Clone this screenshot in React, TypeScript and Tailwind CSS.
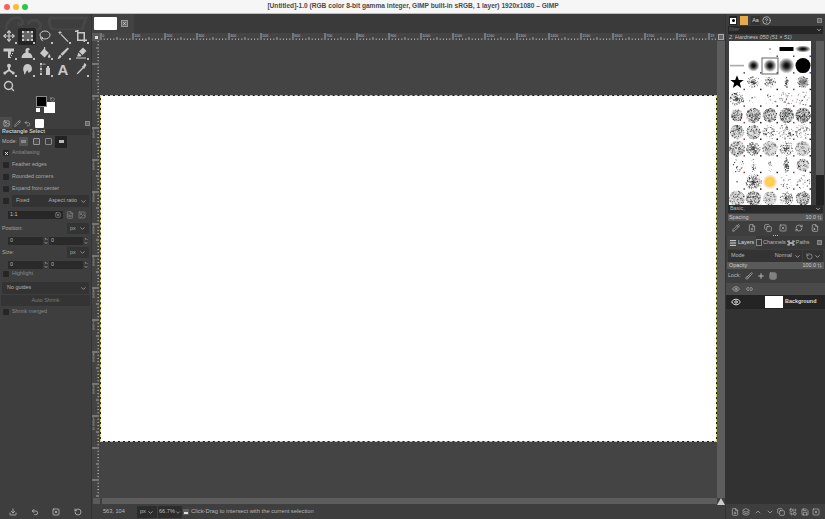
import type { ReactNode } from 'react';
import { ChevronDown, ChevronUp, Eye, Move, Lasso, Search, Undo2, RotateCcw, SquareX, Layers, FileText, Copy, Pencil, RefreshCw, ArrowUpDown, Link2, Plus, Grid3x3, Brush, FilePlus, Save, Download, Image, HelpCircle, FileInput, Combine, Menu, X } from 'lucide-react';

const font = 'font-["Liberation_Sans",Arial,sans-serif]';

function Glyph({ children }: { children: ReactNode }) {
  return (
    <svg width="12" height="12" viewBox="0 0 12 12" fill="currentColor">
      {children}
    </svg>
  );
}

// gimp's own tool icons, the packages have nothing close for most of these
const tools: ReactNode[] = [
  <Move size={12} strokeWidth={2.4} />,
  <span className="w-[11px] h-[10px] border-2 border-dotted border-[#c8c8c8] bg-[#666]" />,
  <Lasso size={12} strokeWidth={2} />,
  <Glyph>
    <path d="M3 .5l.6 1.6 1.6.6-1.6.6L3 5l-.6-1.7L.8 2.7l1.6-.6z" />
    <path d="M4.5 4l7 7.2-.9.8-7-7.2z" />
  </Glyph>,
  <Glyph>
    <path d="M2 0h1.5v2H10v7.5h2V11h-2v1H8.5v-1H2V2H0V.5h2zm1.5 3.5V9.5h5v-6z" />
  </Glyph>,
  <Glyph>
    <path d="M.5 1.5H11v3H8v2.5l-1 1V11H5V4.5H.5z" />
    <path d="M9 6h1v1H9zM8 8h1v1H8zM7 10h1v1H7z" />
  </Glyph>,
  <Glyph>
    <path d="M.5 11c0-3 2-5 4-5.3V3c0-2.500 3.500-2.800 4.500-.6L7.500 3v2.700c2.500.3 4 2.300 4 5.300z" />
  </Glyph>,
  <Glyph>
    <path d="M5 1.500L9.800 6 5.500 10.500 1 6.200z" />
    <path d="M5 0h1.200v4H5zM10.200 7c.8 1.200 1.300 2 1.300 2.700a1.200 1.200 0 0 1-2.500 0c0-.7.500-1.500 1.200-2.700z" />
  </Glyph>,
  <Glyph>
    <path d="M10.600.5L12 1.800 5.500 8.800 3.500 7z" />
    <path d="M3 7.800l1.600 1.500C4 11 2.500 11.700.5 12c.8-1 1-3 2.500-4.200z" />
  </Glyph>,
  <Glyph>
    <path d="M8 .5L11.500 4 7.500 8 4 4.500z" />
    <path d="M3.500 5.500L6.500 8.500 5.500 9.500 2 9.500zM1 10.500h10v1H1z" />
  </Glyph>,
  <Glyph>
    <circle cx="6" cy="2.800" r="2" />
    <path d="M5 4h2v2.500l3 2.200-1 1.600L6 8.200 3 10.300 2 8.700l3-2.200z" />
    <circle cx="1.800" cy="10" r="1.500" />
    <circle cx="10.200" cy="10" r="1.500" />
  </Glyph>,
  <Glyph>
    <path d="M6.500 1a4.500 4.500 0 0 1 2 8.500C6.800 10 6.500 8.500 7.500 7.500 6 7 5 8.500 4 11.500c-1 0-1-1.500-1-2.500C1.500 7 2 1 6.500 1z" />
  </Glyph>,
  <Glyph>
    <path d="M7 5.500c0-1 1-1 1-1V3h2v1.500s1 0 1 1V12H7z" />
    <path d="M1 0h2v2H1zM1 5h2v2H1zM1 10h2v2H1zM1.600 2.500h.8v2h-.8zM1.600 7.500h.8v2h-.8zM3.500 .7h3v.7h-3z" />
  </Glyph>,
  <span className={`text-[15px] leading-none font-bold ${font}`}>A</span>,
  <Glyph>
    <path d="M9 .5c1-.7 2.800 1 2.200 2.200L9.700 4.300l.5.5-1 1-.6-.5-5.100 5.200-2 1 1-2.100 5.100-5.200-.5-.6 1-1 .4.400z" />
  </Glyph>,
  <Search size={12} strokeWidth={2.8} />,
];

function Check({ on }: { on?: boolean }) {
  return (
    <span className="w-[6px] h-[6px] rounded-[1px] bg-[#262626] flex items-center justify-center text-white shrink-0">
      {on && <X size={5} strokeWidth={4} />}
    </span>
  );
}

function CheckRow({ label, on, dim }: { label: string; on?: boolean; dim?: boolean }) {
  return (
    <div className="h-[12px] flex items-center gap-[3px] pl-[3px]">
      <Check on={on} />
      <span className={dim ? 'text-[#8a8a8a]' : 'text-[#a8a8a8]'}>{label}</span>
    </div>
  );
}

function Spin({ value, w }: { value: string; w: string }) {
  return (
    <div className={`h-[8px] bg-[#2a2a2a] rounded-[1px] flex items-center justify-between pl-[2px] text-[#b8b8b8] ${w}`}>
      <span>{value}</span>
      <span className="w-[5px] flex flex-col items-center text-[#c8c8c8] bg-[#3a3a3a]">
        <ChevronUp size={4} strokeWidth={4} />
        <ChevronDown size={4} strokeWidth={4} />
      </span>
    </div>
  );
}

function PxSelect() {
  return (
    <div className="w-[22px] h-[11px] bg-[#333] rounded-[1px] flex items-center justify-between px-[3px] text-[#a8a8a8]">
      <span>px</span>
      <ChevronDown size={7} strokeWidth={2.5} />
    </div>
  );
}

function ToolOptions() {
  return (
    <div className={`flex-1 text-[5.4px] leading-none ${font}`}>
      <div className="h-[6px] mx-[1px] bg-[#353535] flex items-center pl-[1px] font-bold text-[#c4c4c4]">Rectangle Select</div>
      <div className="h-[13px] flex items-center pl-[2px] text-[#b0b0b0]">
        <span className="w-[17px]">Mode:</span>
        <div className="flex items-center gap-[3px] text-[#777]">
          <span className="w-[9px] h-[9px] bg-[#555] rounded-[1px] flex items-center justify-center"><span className="w-[5px] h-[3px] bg-[#888]" /></span>
          <span className="w-[7px] h-[7px] border border-[#999] bg-[#4a4a4a] rounded-[1px] ml-[2px]" />
          <span className="w-[7px] h-[7px] border border-[#888] rounded-[1px] ml-[2px]" />
          <span className="w-[12px] h-[12px] bg-[#222] rounded-[1px] flex items-center justify-center">
            <span className="w-[5px] h-[3px] bg-[#bbb]" />
          </span>
        </div>
      </div>
      <div className="mt-[-1px]">
        <CheckRow label="Antialiasing" on dim />
        <CheckRow label="Feather edges" />
        <CheckRow label="Rounded corners" />
        <CheckRow label="Expand from center" />
      </div>
      <div className="h-[12px] flex items-center gap-[3px] pl-[3px] pr-[2px]">
        <Check />
        <div className="flex-1 h-[12px] bg-[#333] rounded-[1px] flex items-center justify-between pl-[4px] pr-[2px] text-[#b0b0b0]">
          <span>Fixed</span>
          <span className="flex items-center gap-[3px]">Aspect ratio <ChevronDown size={7} strokeWidth={2.5} /></span>
        </div>
      </div>
      <div className="h-[10px] mt-[3px] flex items-center pl-[8px] gap-[3px]">
        <div className="w-[55px] h-[8px] bg-[#272727] rounded-[1px] flex items-center justify-between px-[2px] text-[#c4c4c4]">
          <span>1:1</span>
          <SquareX size={6} className="text-[#aaa]" />
        </div>
        <FileText size={8} className="text-[#8d8d8d]" />
        <Image size={8} className="text-[#8d8d8d] ml-[1px]" />
      </div>
      <div className="h-[11px] mt-[3px] flex items-center justify-between pl-[2px] pr-[2px] text-[#a8a8a8]">
        <span>Position:</span>
        <PxSelect />
      </div>
      <div className="h-[9px] mt-[2px] flex items-center pl-[8px] gap-[1px]">
        <Spin value="0" w="w-[40px]" />
        <Spin value="0" w="w-[39px]" />
      </div>
      <div className="h-[11px] mt-[2px] flex items-center justify-between pl-[2px] pr-[2px] text-[#a8a8a8]">
        <span>Size:</span>
        <PxSelect />
      </div>
      <div className="h-[9px] mt-[2px] flex items-center pl-[8px] gap-[1px]">
        <Spin value="0" w="w-[40px]" />
        <Spin value="0" w="w-[39px]" />
      </div>
      <div className="mt-[-1px]">
        <CheckRow label="Highlight" dim />
      </div>
      <div className="h-[12px] mt-[2px] mx-[2px] bg-[#333] rounded-[1px] flex items-center justify-between pl-[5px] pr-[2px] text-[#b0b0b0]">
        <span>No guides</span>
        <ChevronDown size={7} strokeWidth={2.5} />
      </div>
      <div className="h-[11px] mt-[1px] mx-[1px] bg-[#343434] rounded-[1px] flex items-center justify-center text-[#7d7d7d]">Auto Shrink</div>
      <CheckRow label="Shrink merged" dim />
    </div>
  );
}

function LeftDock() {
  return (
    <aside className="w-[91px] shrink-0 bg-[#3e3e3e] flex flex-col relative">
      <svg className="absolute left-0 top-0" width="91" height="16" viewBox="0 0 91 16">
        <path d="M6 16C6 6 14 2 20 4c4 2 3 7 0 7-2 0-2-2 0-2M28 10c2-5 10-5 12 0s-2 6-6 6M50 4h36l-4 12H56c-6 0-8-8-6-12z" fill="none" stroke="#474747" strokeWidth="3" />
      </svg>
      <div className="relative pt-[14px] grid grid-cols-[repeat(5,18px)] auto-rows-[16.500px] h-[80px]">
        {tools.map((icon, i) => (
          <div key={i} className={`relative flex items-center justify-center text-[#c9c9c9] ${i === 1 ? 'bg-[#242424] rounded-[2px]' : ''}`}>
            {icon}
            {i !== 13 && i !== 15 && <span className="absolute right-[1px] bottom-[1px] w-[2px] h-[2px] bg-[#c0c0c0]" />}
          </div>
        ))}
      </div>
      <div className="relative h-[23px] ml-[36px] w-[22px]">
        <span className="absolute left-[8px] top-[8px] w-[11px] h-[11px] bg-white" />
        <span className="absolute left-0 top-[2px] w-[11px] h-[11px] bg-black border border-[#8a8a8a]" />
        <span className="absolute left-0 top-[14px] w-[4px] h-[4px] bg-white" />
        <RotateCcw size={5} className="absolute left-[14px] top-[3px] text-[#ccc]" />
      </div>
      <div className="h-[12px] flex items-center">
        <div className="w-[12px] h-[12px] bg-[#4b4b4b] flex items-center justify-center"><Image size={7} className="text-[#ccc]" /></div>
        <Pencil size={7} className="text-[#bbb] ml-[2px]" />
        <Undo2 size={7} className="text-[#bbb] ml-[3px]" />
        <span className="w-[9px] h-[9px] bg-white ml-[4px] rounded-[1px]" />
        <span className="w-[5px] h-[5px] bg-[#666] ml-[41px] border border-[#888]" />
      </div>
      <ToolOptions />
      <div className="h-[14px] flex items-center justify-around pl-[2px] pr-[2px] text-[#bdbdbd]">
        <Download size={8} strokeWidth={2.4} />
        <Undo2 size={8} strokeWidth={2.4} />
        <SquareX size={8} strokeWidth={2.4} />
        <RotateCcw size={8} strokeWidth={2.4} />
      </div>
    </aside>
  );
}

const hTicks = Array.from({ length: 195 }, (_, i) => i);
const vTicks = Array.from({ length: 148 }, (_, i) => i);
const rulerLabels = ['0', '100', '200', '300', '400', '500', '600', '700', '800', '900', '1000', '1100', '1200', '1300', '1400', '1500', '1600', '1700', '1800', '19'];
const sideLabels = ['0', '100', '200', '300', '400', '500', '600', '700', '800', '900', '1000'];

function TopRuler() {
  return (
    <svg width="618" height="8" viewBox="0 0 618 8" className="block">
      {hTicks.map((i) => {
        const x = 1 + i * 3.2;
        const h = i % 10 === 0 ? 8 : i % 5 === 0 ? 3 : 1.6;
        return <line key={i} x1={x} x2={x} y1={7 - h} y2={7} stroke="#c4c4c4" strokeWidth="0.8" />;
      })}
      {rulerLabels.map((n, i) => (
        <text key={i} x={2.2 + i * 32} y="3.600" fontSize="3.600" fill="#bdbdbd" fontFamily="Liberation Sans">{n}</text>
      ))}
    </svg>
  );
}

function LeftRuler() {
  return (
    <svg width="8" height="458" viewBox="0 0 8 458" className="block">
      {vTicks.map((i) => {
        const y = -9 + i * 3.2;
        const w = i % 10 === 0 ? 8 : i % 5 === 0 ? 3 : 1.6;
        return <line key={i} x1={7 - w} x2={7} y1={y} y2={y} stroke="#c4c4c4" strokeWidth="0.8" />;
      })}
      {sideLabels.map((n, i) => (
        <text key={n} x="0.500" y={55 + i * 32 + 3.5} fontSize="3.400" fill="#bdbdbd" fontFamily="Liberation Sans">
          {n.split('').map((d, j) => <tspan key={j} x="0.500" dy={j === 0 ? 0 : 3.4}>{d}</tspan>)}
        </text>
      ))}
    </svg>
  );
}

function Center() {
  return (
    <main className="flex-1 min-w-0 bg-[#444444] flex flex-col border-x border-[#333]">
      <div className="h-[19px] bg-[#3a3a3a] flex shrink-0">
        <div className="w-[42px] bg-[#424242] flex items-center pl-[2px]">
          <span className="w-[23px] h-[13px] bg-white rounded-[1px]" />
          <span className="ml-[4px] w-[7px] h-[7px] bg-[#666] border border-[#999] flex items-center justify-center text-[#ddd]"><X size={5} strokeWidth={3} /></span>
        </div>
      </div>
      <div className="flex-1 min-h-0 grid grid-cols-[8px_1fr_8px] grid-rows-[8px_1fr]">
        <div className="bg-[#5a5a5a] flex items-center justify-center"><span className="w-[3px] h-[3px] bg-[#ddd]" /></div>
        <div className="overflow-hidden bg-[#444]"><TopRuler /></div>
        <div className="flex items-start justify-center bg-[#444]"><span className="w-[6px] h-[6px] mt-[1px] border border-[#aaa] bg-[#666]" /></div>
        <div className="overflow-hidden"><LeftRuler /></div>
        <div className="pt-[54px]">
          <div className="w-[617px] h-[347px] border border-dashed border-[#d5d56a] bg-[#1c1c1c]">
            <div className="w-full h-full bg-white" />
          </div>
        </div>
        <div className="bg-[#5d5d5d]" />
      </div>
      <div className="h-[7px] flex shrink-0 bg-[#3f3f3f]">
        <span className="w-[7px] h-[6px] ml-[1px] bg-[#5a5a5a]" />
        <span className="flex-1 h-[6px] ml-[2px] bg-[#5d5d5d]" />
        <span className="w-0 h-0 border-x-[4px] border-x-transparent border-b-[7px] border-b-[#ccc]" />
      </div>
      <div className={`h-[14px] shrink-0 flex items-center text-[5.6px] leading-none text-[#b8b8b8] bg-[#3e3e3e] ${font}`}>
        <span className="ml-[11px] w-[34px]">563, 104</span>
        <div className="h-[12px] w-[20px] bg-[#2c2c2c] rounded-[1px] flex items-center justify-between px-[3px]">
          <span>px</span><ChevronDown size={7} strokeWidth={2.5} />
        </div>
        <div className="h-[12px] w-[24px] bg-[#2c2c2c] rounded-[1px] ml-[1px] flex items-center justify-between px-[1px]">
          <span>66.7%</span><ChevronDown size={7} strokeWidth={2.5} />
        </div>
        <span className="w-[6px] h-[6px] bg-[#5e5e5e] ml-[1px] flex items-end justify-center"><span className="w-[4px] h-[2px] bg-[#ddd] mb-[1px]" /></span>
        <span className="ml-[2px] text-[5.800px] text-[#b4b4b4]">Click-Drag to intersect with the current selection</span>
      </div>
    </main>
  );
}

function rng(seed: number) {
  let s = seed * 7919 + 13;
  return () => {
    s = (s * 1664525 + 1013904223) % 4294967296;
    return s / 4294967296;
  };
}

type Cell = [kind: string, n?: number, r?: number];

const brushCells: Cell[][] = [
  [['empty'], ['empty'], ['dot'], ['bar'], ['ellipse']],
  [['line'], ['soft', 0, 6], ['soft', 0, 6.500], ['soft', 0, 8], ['solid', 0, 7.500]],
  [['star'], ['cluster', 110, 6], ['cluster', 90, 6], ['vert', 60, 6], ['blotch', 60, 6]],
  [['cluster', 200, 7], ['spray', 5, 6], ['spray', 14, 7], ['spray', 34, 7], ['spray', 24, 7]],
  [['disc', 130, 6], ['disc', 220, 7.500], ['disc', 170, 7], ['disc', 240, 7.500], ['disc', 300, 7.500]],
  [['disc', 150, 7], ['disc', 130, 7], ['spray', 50, 7], ['spray', 60, 8], ['spray', 60, 8]],
  [['disc', 170, 8], ['cluster', 240, 7], ['disc', 90, 7.500], ['cluster', 160, 7], ['disc', 90, 7.500]],
  [['spray', 22, 7], ['vert', 30, 7], ['vert', 18, 7], ['vert', 110, 8], ['disc', 90, 6.500]],
  [['dot'], ['cluster', 260, 8], ['glow'], ['spray', 24, 7], ['spray', 34, 7]],
  [['disc', 120, 8], ['disc', 200, 7.500], ['disc', 70, 7], ['cluster', 170, 7], ['disc', 150, 7]],
];

const starPoints = '0,-7 1.8,-2.2 6.7,-2.2 2.8,.9 4.2,5.7 0,2.8 -4.2,5.7 -2.8,.9 -6.7,-2.2 -1.8,-2.2';

function BrushCell({ cell, r, c }: { cell: Cell; r: number; c: number }) {
  const [kind, n = 0, rad = 6] = cell;
  const cx = 8 + c * 16.5;
  const cy = 8 + r * 16.6;
  const rand = rng(r * 10 + c + 3);
  let body: ReactNode = null;
  if (kind === 'dot') body = <circle cx={cx} cy={cy} r="0.700" fill="#333" />;
  if (kind === 'bar') body = <rect x={cx - 7} y={cy - 2} width="14" height="4" fill="#000" />;
  if (kind === 'ellipse') body = <ellipse cx={cx} cy={cy} rx="8" ry="3.500" fill="url(#softGrad)" />;
  if (kind === 'line') body = <rect x={cx - 7} y={cy - 0.8} width="14" height="1.600" fill="#aaa" />;
  if (kind === 'soft' || kind === 'blotch') body = <circle cx={cx} cy={cy} r={rad} fill="url(#softGrad)" opacity={kind === 'blotch' ? 0.55 : 1} />;
  if (kind === 'solid') body = <circle cx={cx} cy={cy} r={rad} fill="#000" />;
  if (kind === 'star') body = <polygon transform={`translate(${cx} ${cy})`} points={starPoints} fill="#000" />;
  if (kind === 'glow') body = <circle cx={cx} cy={cy} r="7.500" fill="url(#glowGrad)" />;
  if (kind === 'disc' || kind === 'cluster' || kind === 'vert' || kind === 'spray' || kind === 'blotch') {
    const dots = Array.from({ length: n }, (_, i) => {
      const a = rand() * Math.PI * 2;
      const k = rand();
      // clusters pile up in the middle, discs fill out to the edge
      const d = (kind === 'cluster' || kind === 'vert' ? k : Math.sqrt(k)) * rad;
      const xs = kind === 'vert' ? 0.35 : 1;
      const size = kind === 'spray' ? 0.25 + rand() * 0.4 : 0.2 + rand() * 0.35;
      return <circle key={i} cx={cx + Math.cos(a) * d * xs} cy={cy + Math.sin(a) * d} r={size} fill={rand() > 0.45 ? '#151515' : '#777'} />;
    });
    body = (
      <>
        {kind === 'disc' && <circle cx={cx} cy={cy} r={rad} fill="#ccc" opacity="0.6" />}
        {body}
        {dots}
      </>
    );
  }
  const mark = kind === 'empty' ? null : r < 2 || (r === 2 && c === 0) ? '#3a4a80' : (r * 3 + c) % 3 === 0 ? '#a33' : '#222';
  return (
    <g>
      {body}
      {mark && <rect x={cx + 6.5} y={cy + 6.5} width="1.500" height="1.500" fill={mark} />}
    </g>
  );
}

function BrushGrid() {
  return (
    <svg width="82" height="164" viewBox="0 0 82 164" className="block bg-white">
      <defs>
        <radialGradient id="softGrad">
          <stop offset="0" stopColor="#000" />
          <stop offset="0.3" stopColor="#222" />
          <stop offset="1" stopColor="#000" stopOpacity="0" />
        </radialGradient>
        <radialGradient id="glowGrad">
          <stop offset="0" stopColor="#ffe050" />
          <stop offset="0.5" stopColor="#ffc84c" />
          <stop offset="1" stopColor="#ffb060" stopOpacity="0" />
        </radialGradient>
      </defs>
      {brushCells.map((row, r) => row.map((cell, c) => <BrushCell key={`${r}-${c}`} cell={cell} r={r} c={c} />))}
      <rect x="33" y="17" width="16" height="16" fill="none" stroke="#666" strokeWidth="1" />
    </svg>
  );
}

function RightDock() {
  return (
    <aside className={`w-[99px] shrink-0 bg-[#3e3e3e] flex flex-col text-[5.4px] leading-none text-[#b8b8b8] ${font}`}>
      <div className="h-[12px] flex items-center pl-[3px] pt-[1px]">
        <span className="w-[8px] h-[9px] bg-[#222] flex items-center justify-center"><span className="w-[6px] h-[6px] bg-white flex items-center justify-center"><span className="w-[3px] h-[3px] rounded-full bg-black" /></span></span>
        <span className="w-[8px] h-[9px] bg-[#e9a84a] ml-[3px]" />
        <span className="w-[9px] h-[9px] bg-[#333] ml-[3px] flex items-center justify-center text-[#ddd]">Aa</span>
        <HelpCircle size={9} className="ml-[2px] text-[#ccc]" />
        <span className="w-[5px] h-[5px] bg-[#666] border border-[#888] ml-auto mr-[3px]" />
      </div>
      <div className="h-[8px] mx-[2px] bg-[#262626] flex items-center justify-between px-[1px] text-[#666]">
        <span className="italic">filter</span>
        <ChevronDown size={6} strokeWidth={3} className="text-[#ccc]" />
      </div>
      <div className="h-[7px] pl-[3px] flex items-center italic text-[#c4c4c4]">2. Hardness 050 (51 × 51)</div>
      <div className="flex h-[164px] pl-[3px]">
        <BrushGrid />
        <div className="w-[8px] ml-[5px] bg-[#222] flex flex-col">
          <span className="h-[134px] bg-[#5d5d5d]" />
        </div>
      </div>
      <div className="h-[8px] mx-[2px] bg-[#2a2a2a] flex items-center justify-between px-[2px]">
        <span>Basic,</span>
        <ChevronDown size={6} strokeWidth={3} className="text-[#ccc]" />
      </div>
      <div className="h-[7px] mx-[2px] mt-[1px] bg-[#5a5a5a] flex items-center justify-between px-[1px] text-[#ccc]">
        <span>Spacing</span>
        <span className="flex items-center gap-[1px]">10.0 <ArrowUpDown size={5} /></span>
      </div>
      <div className="h-[13px] flex items-center justify-around px-[2px] text-[#bbb]">
        <Pencil size={8} />
        <FilePlus size={8} />
        <Copy size={8} />
        <SquareX size={8} />
        <RefreshCw size={8} />
        <FileInput size={8} />
      </div>
      <div className="h-[2px] flex items-center justify-center gap-[1px]">
        <span className="w-[1px] h-[1px] bg-[#bbb]" />
        <span className="w-[1px] h-[1px] bg-[#bbb]" />
        <span className="w-[1px] h-[1px] bg-[#bbb]" />
      </div>
      <div className="h-[13px] flex items-center pl-[1px] bg-[#393939]">
        <span className="w-[29px] h-[13px] bg-[#444] flex items-center gap-[1px] pl-[2px]"><Menu size={8} strokeWidth={3} className="text-[#ddd]" /><span className="text-[#ddd]">Layers</span></span>
        <span className="flex items-center gap-[1px]"><span className="w-[6px] h-[7px] border border-[#888]" /><span>Channels</span></span>
        <span className="flex items-center gap-[1px] ml-[1px]">
          <svg width="8" height="6" viewBox="0 0 8 6" fill="none" stroke="#bbb" strokeWidth="1"><path d="M0 1l8 4M0 5l8-4" /><path d="M2 0v6M6 0v6" /></svg>
          <span>Paths</span>
        </span>
        <span className="w-[5px] h-[5px] bg-[#666] border border-[#888] ml-auto mr-[3px]" />
      </div>
      <div className="h-[12px] mt-[1px] flex items-center gap-[1px] pl-[2px] pr-[2px]">
        <div className="flex-1 h-[12px] bg-[#333] flex items-center justify-between pl-[3px] pr-[1px]">
          <span>Mode</span>
          <span className="flex items-center gap-[2px]">Normal <ChevronDown size={7} strokeWidth={2.5} /></span>
        </div>
        <div className="w-[20px] h-[12px] bg-[#333] flex items-center justify-center gap-[1px]">
          <RotateCcw size={7} /><ChevronDown size={7} strokeWidth={2.5} />
        </div>
      </div>
      <div className="h-[7px] mx-[1px] bg-[#5a5a5a] flex items-center justify-between px-[2px] text-[#ccc]">
        <span>Opacity</span>
        <span className="flex items-center gap-[1px]">100.0 <ArrowUpDown size={5} /></span>
      </div>
      <div className="h-[14px] flex items-center pl-[2px] gap-[4px]">
        <span>Lock:</span>
        <Brush size={8} />
        <Plus size={8} strokeWidth={3} />
        <Grid3x3 size={8} />
      </div>
      <div className="h-[12px] bg-[#4a4a4a] flex items-center">
        <span className="w-[20px] flex justify-center"><Eye size={8} /></span>
        <span className="w-[7px] flex justify-center"><Link2 size={8} /></span>
      </div>
      <div className="h-[14px] bg-[#242424] flex items-center font-bold text-[#ddd]">
        <span className="w-[20px] flex justify-center"><Eye size={10} strokeWidth={2.4} className="text-[#d8d8d8]" /></span>
        <span className="w-[18px] h-[12px] bg-white ml-[19px]" />
        <span className="ml-[2px]">Background</span>
      </div>
      <div className="flex-1 bg-[#323232]" />
      <div className="h-[15px] flex items-center justify-around px-[3px] text-[#bbb]">
        <FilePlus size={8} />
        <Layers size={8} />
        <ChevronUp size={8} />
        <ChevronDown size={8} />
        <Copy size={8} />
        <Combine size={8} />
        <Save size={8} />
        <SquareX size={8} />
      </div>
    </aside>
  );
}

export default function App() {
  return (
    <div className="w-screen h-screen overflow-hidden flex flex-col bg-[#3e3e3e]">
      <header className={`h-[14px] shrink-0 bg-[#f6f6f6] border-b border-[#bdbdbd] flex items-center ${font}`}>
        <div className="flex gap-[3px] pl-[4px]">
          <span className="w-[6px] h-[6px] rounded-full bg-[#fc5f57]" />
          <span className="w-[6px] h-[6px] rounded-full bg-[#fdbc2e]" />
          <span className="w-[6px] h-[6px] rounded-full bg-[#28c83f]" />
        </div>
        <span className="flex-1 text-center text-[6.600px] leading-none font-bold text-[#4b4b4b] pr-[27px]">
          [Untitled]-1.0 (RGB color 8-bit gamma integer, GIMP built-in sRGB, 1 layer) 1920x1080 – GIMP
        </span>
      </header>
      <div className="flex-1 min-h-0 flex">
        <LeftDock />
        <Center />
        <RightDock />
      </div>
    </div>
  );
}
